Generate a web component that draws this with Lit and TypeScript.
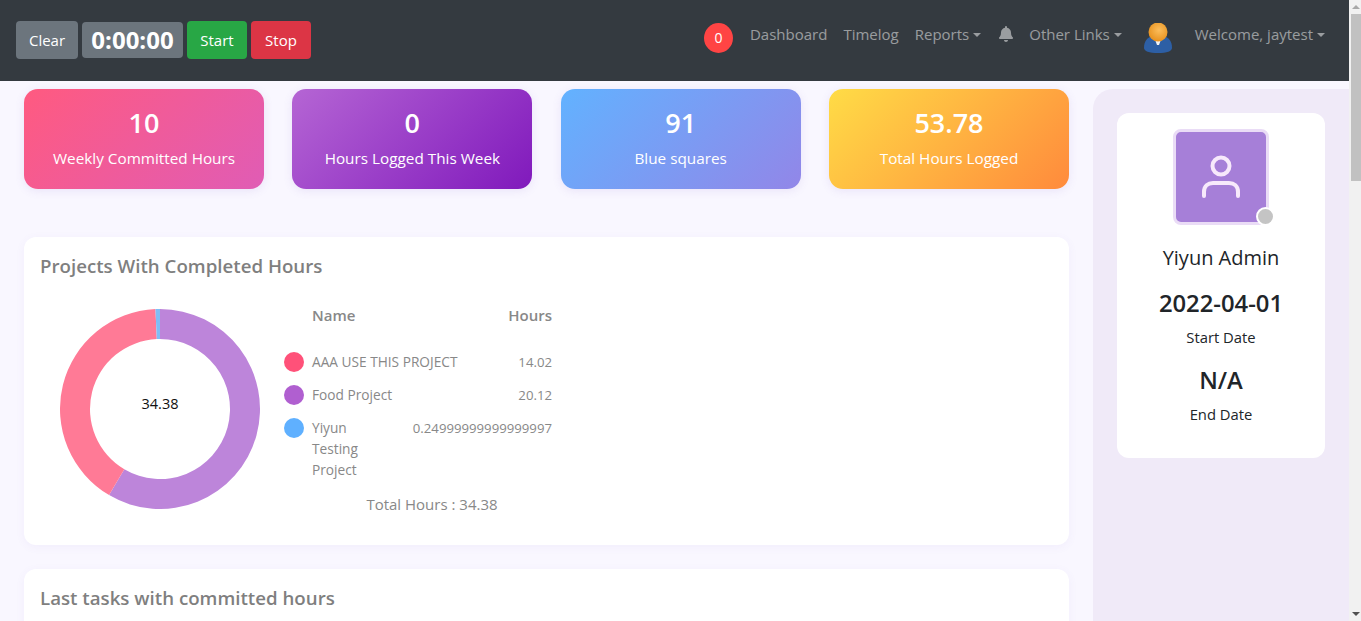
import { LitElement, html, css, svg } from 'lit';
import { customElement } from 'lit/decorators.js';

const FONT = css`'Open Sans', 'Noto Sans', sans-serif`;

const stats = [
    { value: '10', label: 'Weekly Committed Hours', cls: 'pink' },
    { value: '0', label: 'Hours Logged This Week', cls: 'purple' },
    { value: '91', label: 'Blue squares', cls: 'blue' },
    { value: '53.78', label: 'Total Hours Logged', cls: 'orange' },
];

const projects = [
    { name: 'AAA USE THIS PROJECT', hours: 14.02, label: '14.02', dot: '#ff5179', arc: '#ff7a96', narrow: false },
    { name: 'Food Project', hours: 20.12, label: '20.12', dot: '#b05fd0', arc: '#bd85da', narrow: false },
    { name: 'Yiyun Testing Project', hours: 0.25, label: '0.24999999999999997', dot: '#5fb0ff', arc: '#7fbdf5', narrow: true },
];

// the chart runs clockwise from 12 o'clock: food, then aaa, then yiyun
const arcOrder = [projects[1], projects[0], projects[2]];

function arcPath(from: number, to: number) {
    const R = 100;
    const r = 70;
    const pt = (rad: number, a: number) => `${100 + rad * Math.sin(a)} ${100 - rad * Math.cos(a)}`;
    const large = to - from > Math.PI ? 1 : 0;
    return `M${pt(R, from)}A${R} ${R} 0 ${large} 1 ${pt(R, to)}L${pt(r, to)}A${r} ${r} 0 ${large} 0 ${pt(r, from)}Z`;
}

@customElement('app-root')
export class AppRoot extends LitElement {
    static override styles = css`
        :host {
            display: block;
            position: relative;
            width: 1361px;
            height: 621px;
            overflow: hidden;
            font-family: ${FONT};
            background: #f1f1f1;
        }
        .page {
            width: 1349px;
            height: 621px;
            overflow: hidden;
            background: #f9f7ff;
        }
        .nav {
            height: 81px;
            box-sizing: border-box;
            background: #343a40;
            display: flex;
            align-items: center;
            padding: 0 24px 2px 16px;
        }
        .btn {
            border: 0;
            font: inherit;
            font-size: 15px;
            color: #fff;
            height: 38px;
            border-radius: 4px;
            margin-right: 4px;
            display: flex;
            align-items: center;
            justify-content: center;
        }
        .clear { width: 62px; background: #6c757d; }
        .timer {
            width: 101px;
            height: 36px;
            background: #6c757d;
            font-size: 24px;
            font-weight: 700;
        }
        .start { width: 60px; background: #28a745; }
        .stop { width: 60px; background: #dc3545; }
        .links {
            margin-left: auto;
            display: flex;
            align-items: center;
            color: rgba(255, 255, 255, 0.5);
            font-size: 15px;
            margin-top: -12px;
        }
        .badge {
            width: 29px;
            height: 30px;
            border-radius: 50%;
            background: #ff4444;
            color: #fff;
            font-size: 14px;
            display: flex;
            align-items: center;
            justify-content: center;
            margin: 8px 17px 0 0;
        }
        .link { margin-right: 16px; white-space: nowrap; }
        .caret::after {
            content: '';
            display: inline-block;
            margin-left: 4px;
            vertical-align: 3px;
            border-top: 4.5px solid;
            border-left: 4.5px solid transparent;
            border-right: 4.5px solid transparent;
        }
        .bell { margin: 0 15px 0 1px; display: block; }
        .user { margin: 9px 23px 0 6px; display: block; }
        .link.last { margin-right: 0; }

        .content {
            display: flex;
            align-items: flex-start;
            padding: 8px 0 0 24px;
            gap: 24px;
        }
        .main { width: 1045px; flex: none; }
        .stats { display: flex; justify-content: space-between; margin-bottom: 48px; }
        .stat {
            width: 240px;
            height: 100px;
            border-radius: 14px;
            color: #fff;
            text-align: center;
            box-sizing: border-box;
            padding-top: 15px;
            box-shadow: 0 2px 10px rgba(120, 90, 200, 0.12);
        }
        .stat .num { font-size: 27px; font-weight: 600; line-height: 38px; }
        .stat .lbl { font-size: 15.3px; line-height: 24px; margin-top: 4px; }
        .pink { background: linear-gradient(135deg, #ff5a80, #e05cb5); }
        .purple { background: linear-gradient(135deg, #b565d4, #8019bc); }
        .blue { background: linear-gradient(135deg, #62b2ff, #9286e8); }
        .orange { background: linear-gradient(135deg, #ffdc46, #ff8a3c); }

        .card {
            background: #fff;
            border-radius: 12px;
            box-shadow: 0 2px 10px rgba(120, 90, 200, 0.06);
            padding: 16px;
            margin-bottom: 24px;
        }
        .card h2 {
            margin: 0;
            font-size: 18.7px;
            font-weight: 600;
            line-height: 26px;
            color: #7f7f7f;
        }
        .chart-row { display: flex; margin-top: 30px; }
        .donut { position: relative; width: 200px; height: 200px; margin: 0 24px 0 20px; flex: none; }
        .donut svg { display: block; }
        .donut .mid {
            position: absolute;
            inset: 0 0 12px 0;
            display: flex;
            align-items: center;
            justify-content: center;
            font-size: 14.5px;
            color: #111;
        }
        .legend { width: 268px; color: #888; font-size: 13.7px; }
        .legend .head {
            display: flex;
            justify-content: space-between;
            padding-left: 28px;
            font-size: 15px;
            font-weight: 600;
            line-height: 21px;
            margin: -4px 0 26px;
        }
        .row { display: flex; line-height: 21px; margin-bottom: 12px; }
        .dot { width: 20px; height: 20px; border-radius: 50%; margin-right: 8px; flex: none; }
        .name { flex: 1; margin-top: -1px; }
        .name.narrow { max-width: 60px; }
        .val { margin-left: auto; white-space: nowrap; font-size: 13.2px; }
        .total { text-align: center; font-size: 15px; line-height: 22px; margin: 13px 0 14px; padding-left: 28px; }
        .last-card { min-height: 200px; }

        .side {
            width: 256px;
            height: 700px;
            flex: none;
            background: #f0eaf8;
            border-radius: 20px 0 0 0;
            box-sizing: border-box;
            padding: 24px;
        }
        .profile {
            background: #fff;
            border-radius: 12px;
            height: 345px;
            box-sizing: border-box;
            padding-top: 16px;
            text-align: center;
            color: #212529;
        }
        .avatar {
            position: relative;
            width: 96px;
            height: 96px;
            margin: 0 auto;
            box-sizing: border-box;
            background: #a67fd8;
            border: 3px solid #eadcf6;
            border-radius: 8px;
            display: flex;
            align-items: center;
            justify-content: center;
        }
        .status {
            position: absolute;
            right: -9px;
            bottom: -4px;
            width: 15px;
            height: 15px;
            background: #c4c4c4;
            border: 2px solid #fff;
            border-radius: 50%;
        }
        .pname { font-size: 20px; line-height: 28px; margin-top: 19px; }
        .date { font-size: 23.8px; font-weight: 600; line-height: 32px; margin-top: 15px; }
        .cap { font-size: 14.8px; line-height: 20px; margin-top: 8px; }
        .date.second { margin-top: 17px; }

        .scrollbar {
            position: absolute;
            top: 0;
            right: 0;
            width: 12px;
            height: 621px;
        }
        .thumb {
            position: absolute;
            top: 14px;
            left: 2px;
            right: 0;
            height: 167px;
            background: #c1c1c1;
        }
        .arrow {
            position: absolute;
            left: 3px;
            border-left: 4px solid transparent;
            border-right: 4px solid transparent;
        }
        .arrow.up { top: 5px; border-bottom: 4px solid #a8a8a8; }
        .arrow.down { bottom: 5px; border-top: 4px solid #505050; }
    `;

    private renderDonut() {
        const total = projects.reduce((sum, p) => sum + p.hours, 0);
        let at = 0;
        const arcs = arcOrder.map((p) => {
            const from = at;
            at += (p.hours / total) * Math.PI * 2;
            return svg`<path d=${arcPath(from, at)} fill=${p.arc}></path>`;
        });
        return html`<div class="donut">
            <svg width="200" height="200" viewBox="0 0 200 200">${arcs}</svg>
            <div class="mid">34.38</div>
        </div>`;
    }

    override render() {
        return html`
            <div class="page">
                <div class="nav">
                    <div class="btn clear">Clear</div>
                    <div class="btn timer">0:00:00</div>
                    <div class="btn start">Start</div>
                    <div class="btn stop">Stop</div>
                    <div class="links">
                        <div class="badge">0</div>
                        <div class="link">Dashboard</div>
                        <div class="link">Timelog</div>
                        <div class="link caret">Reports</div>
                        <svg class="bell" width="16" height="16" viewBox="0 0 448 512" fill="currentColor">
                            <path d="M224 512c35 0 64-29 64-64H160c0 35 29 64 64 64zm215-150c-19-21-55-52-55-154 0-78-54-140-128-155V32a32 32 0 1 0-64 0v21C118 68 64 130 64 208c0 102-36 133-55 154-6 6-9 14-9 22 0 16 13 32 32 32h384c19 0 32-16 32-32 0-8-3-16-9-22z"></path>
                        </svg>
                        <div class="link caret">Other Links</div>
                        <svg class="user" width="28" height="30" viewBox="0 0 28 30">
                            <defs>
                                <radialGradient id="head" cx="0.55" cy="0.4" r="0.6">
                                    <stop offset="0" stop-color="#fbbd5c"></stop>
                                    <stop offset="1" stop-color="#e8921f"></stop>
                                </radialGradient>
                            </defs>
                            <path d="M0 25c0-7 3-10 8-12h12c5 2 8 5 8 12 0 3-5 5-14 5S0 28 0 25z" fill="#2d5fa5"></path>
                            <path d="M10 14h8l-3 8h-2z" fill="#f2f2f2"></path>
                            <circle cx="14" cy="9" r="9.5" fill="url(#head)"></circle>
                        </svg>
                        <div class="link caret last">Welcome, jaytest</div>
                    </div>
                </div>
                <div class="content">
                    <div class="main">
                        <div class="stats">
                            ${stats.map(
                                (s) => html`<div class="stat ${s.cls}">
                                    <div class="num">${s.value}</div>
                                    <div class="lbl">${s.label}</div>
                                </div>`,
                            )}
                        </div>
                        <div class="card">
                            <h2>Projects With Completed Hours</h2>
                            <div class="chart-row">
                                ${this.renderDonut()}
                                <div class="legend">
                                    <div class="head"><span>Name</span><span>Hours</span></div>
                                    ${projects.map(
                                        (p) => html`<div class="row">
                                            <span class="dot" style="background:${p.dot}"></span>
                                            <span class="name ${p.narrow ? 'narrow' : ''}">${p.name}</span>
                                            <span class="val">${p.label}</span>
                                        </div>`,
                                    )}
                                    <div class="total">Total Hours : 34.38</div>
                                </div>
                            </div>
                        </div>
                        <div class="card last-card">
                            <h2>Last tasks with committed hours</h2>
                        </div>
                    </div>
                    <div class="side">
                        <div class="profile">
                            <div class="avatar">
                                <svg width="40" height="44" viewBox="0 0 40 44" fill="none" stroke="#f7e9fb" stroke-width="4" stroke-linecap="round">
                                    <circle cx="20" cy="11" r="8.5"></circle>
                                    <path d="M3 41v-4c0-6 4-9 9-9h16c5 0 9 3 9 9v4"></path>
                                </svg>
                                <span class="status"></span>
                            </div>
                            <div class="pname">Yiyun Admin</div>
                            <div class="date">2022-04-01</div>
                            <div class="cap">Start Date</div>
                            <div class="date second">N/A</div>
                            <div class="cap">End Date</div>
                        </div>
                    </div>
                </div>
            </div>
            <div class="scrollbar">
                <div class="arrow up"></div>
                <div class="thumb"></div>
                <div class="arrow down"></div>
            </div>
        `;
    }
}
